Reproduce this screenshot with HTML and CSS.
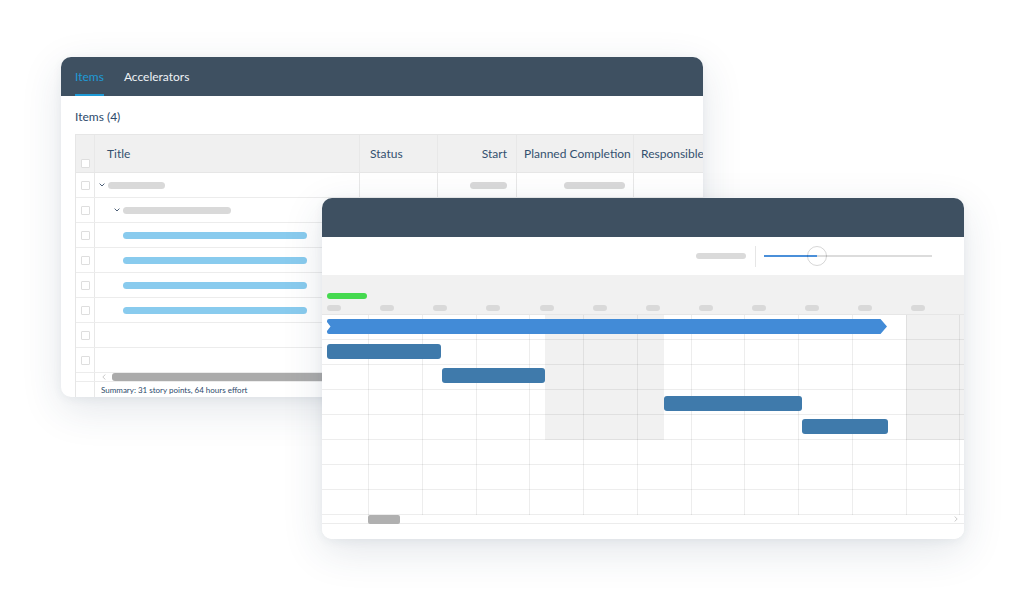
FILE: index.html
```html
<!DOCTYPE html>
<html lang="en">
<head>
<meta charset="utf-8">
<title>Items and Gantt</title>
<link rel="stylesheet" href="styles.css">
</head>
<body>
<div class="desk">

  <section class="win win-items">
    <header class="win-head">
      <nav class="tabs">
        <span class="tab active">Items</span>
        <span class="tab">Accelerators</span>
      </nav>
    </header>
    <div class="items-body">
      <h2 class="items-title">Items (4)</h2>
      <div class="table">
        <div class="tr th">
          <div class="td cb cb-head"><span class="box"></span></div>
          <div class="td c-title">Title</div>
          <div class="td c-status">Status</div>
          <div class="td c-start">Start</div>
          <div class="td c-plan">Planned Completion</div>
          <div class="td c-resp">Responsible</div>
        </div>
        <div class="tr">
          <div class="td cb"><span class="box"></span></div>
          <div class="td c-title lvl1"><svg class="chev" viewBox="0 0 6 4" width="6" height="4"><polyline points="0.6,0.6 3,3 5.4,0.6"/></svg><span class="ph ph-a"></span></div>
          <div class="td c-status"></div>
          <div class="td c-start"><span class="ph ph-start"></span></div>
          <div class="td c-plan"><span class="ph ph-plan"></span></div>
          <div class="td c-resp"></div>
        </div>
        <div class="tr">
          <div class="td cb"><span class="box"></span></div>
          <div class="td c-title lvl2"><svg class="chev" viewBox="0 0 6 4" width="6" height="4"><polyline points="0.6,0.6 3,3 5.4,0.6"/></svg><span class="ph ph-b"></span></div>
          <div class="td c-status"></div>
          <div class="td c-start"></div>
          <div class="td c-plan"></div>
          <div class="td c-resp"></div>
        </div>
        <div class="tr">
          <div class="td cb"><span class="box"></span></div>
          <div class="td c-title lvl3"><span class="ph ph-item"></span></div>
          <div class="td c-status"></div>
          <div class="td c-start"></div>
          <div class="td c-plan"></div>
          <div class="td c-resp"></div>
        </div>
        <div class="tr">
          <div class="td cb"><span class="box"></span></div>
          <div class="td c-title lvl3"><span class="ph ph-item"></span></div>
          <div class="td c-status"></div>
          <div class="td c-start"></div>
          <div class="td c-plan"></div>
          <div class="td c-resp"></div>
        </div>
        <div class="tr">
          <div class="td cb"><span class="box"></span></div>
          <div class="td c-title lvl3"><span class="ph ph-item"></span></div>
          <div class="td c-status"></div>
          <div class="td c-start"></div>
          <div class="td c-plan"></div>
          <div class="td c-resp"></div>
        </div>
        <div class="tr">
          <div class="td cb"><span class="box"></span></div>
          <div class="td c-title lvl3"><span class="ph ph-item"></span></div>
          <div class="td c-status"></div>
          <div class="td c-start"></div>
          <div class="td c-plan"></div>
          <div class="td c-resp"></div>
        </div>
        <div class="tr">
          <div class="td cb"><span class="box"></span></div>
          <div class="td c-title"></div>
          <div class="td c-status"></div>
          <div class="td c-start"></div>
          <div class="td c-plan"></div>
          <div class="td c-resp"></div>
        </div>
        <div class="tr">
          <div class="td cb"><span class="box"></span></div>
          <div class="td c-title"></div>
          <div class="td c-status"></div>
          <div class="td c-start"></div>
          <div class="td c-plan"></div>
          <div class="td c-resp"></div>
        </div>
        <div class="tr tr-scroll">
          <div class="td cb"></div>
          <div class="track">
            <svg class="arr-left" viewBox="0 0 4 6" width="4" height="6"><polyline points="3.4,0.5 0.8,3 3.4,5.5"/></svg>
            <span class="thumb"></span>
          </div>
        </div>
        <div class="tr tr-summary">
          <div class="td cb"></div>
          <div class="summary">Summary: 31 story points, 64 hours effort</div>
        </div>
      </div>
    </div>
  </section>

  <section class="win win-gantt">
    <header class="win-head"></header>
    <div class="toolbar">
      <span class="ph ph-tool"></span>
      <span class="vdiv"></span>
      <div class="slider">
        <span class="slider-fill"></span>
        <span class="knob"></span>
      </div>
    </div>
    <div class="timehead">
      <span class="ph ph-green"></span>
      <div class="ticks">
        <span class="ph tick"></span><span class="ph tick"></span><span class="ph tick"></span>
        <span class="ph tick"></span><span class="ph tick"></span><span class="ph tick"></span>
        <span class="ph tick"></span><span class="ph tick"></span><span class="ph tick"></span>
        <span class="ph tick"></span><span class="ph tick"></span><span class="ph tick"></span>
      </div>
    </div>
    <div class="chart">
      <div class="shade shade-a"></div>
      <div class="shade shade-b"></div>
      <div class="grow"></div>
      <div class="grow"></div>
      <div class="grow"></div>
      <div class="grow"></div>
      <div class="grow"></div>
      <div class="grow"></div>
      <div class="grow"></div>
      <div class="grow"></div>
      <div class="cols">
        <span class="col col-first"></span>
        <span class="col"></span><span class="col"></span><span class="col"></span>
        <span class="col"></span><span class="col"></span><span class="col"></span>
        <span class="col"></span><span class="col"></span><span class="col"></span>
        <span class="col"></span><span class="col"></span><span class="col"></span>
      </div>
      <svg class="bar-summary" viewBox="0 0 560 15" width="560" height="15"><path d="M2 0 H553.5 L560 7.5 L553.5 15 H2 Q0 15 0 13 V12 L3.5 7.5 L0 3 V2 Q0 0 2 0 Z"/></svg>
      <span class="bar bar-1"></span>
      <span class="bar bar-2"></span>
      <span class="bar bar-3"></span>
      <span class="bar bar-4"></span>
    </div>
    <div class="hscroll">
      <span class="thumb thumb-g"></span>
      <svg class="arr-right" viewBox="0 0 4 6" width="4" height="6"><polyline points="0.6,0.5 3.2,3 0.6,5.5"/></svg>
    </div>
    <div class="gfoot"></div>
  </section>

</div>
</body>
</html>
```

FILE: styles.css
```css
* {
  box-sizing: border-box;
  margin: 0;
  padding: 0;
}

body {
  margin: 0;
  background: #ffffff;
  font-family: Lato, "Open Sans", sans-serif;
  color: #2d4a6b;
}

.desk {
  position: relative;
  width: 1024px;
  height: 604px;
  overflow: hidden;
  background: #ffffff;
}

/* ---------- windows ---------- */
.win {
  position: absolute;
  width: 642px;
  background: #ffffff;
  border-radius: 10px;
  overflow: hidden;
  display: flex;
  flex-direction: column;
  box-shadow: 0 12px 40px rgba(40, 60, 90, 0.13), 0 2px 10px rgba(40, 60, 90, 0.06);
}

.win-items {
  left: 61px;
  top: 57px;
  height: 340px;
}

.win-gantt {
  left: 322px;
  top: 198px;
  height: 341px;
}

.win-head {
  flex: none;
  height: 39px;
  background: #3e5061;
}

/* ---------- tabs ---------- */
.tabs {
  display: flex;
  height: 100%;
  padding-left: 14px;
  gap: 20px;
}

.tab {
  display: flex;
  align-items: center;
  height: 100%;
  padding-top: 2px;
  font-size: 12px;
  color: #eef2f6;
  border-bottom: 2px solid transparent;
}

.tab.active {
  color: #1e9ad6;
  border-bottom-color: #1e9ad6;
}

/* ---------- items table ---------- */
.items-body {
  flex: 1;
  padding-left: 14px;
  padding-top: 14px;
  overflow: hidden;
}

.items-title {
  font-size: 12px;
  font-weight: 400;
  line-height: 14px;
  height: 14px;
  margin-bottom: 10px;
  color: #2d4a6b;
}

.table {
  border-left: 1px solid #e6e6e6;
  width: 720px;
}

.tr {
  display: grid;
  grid-template-columns: 19px 265px 78px 79px 117px 160px;
  height: 25px;
  border-bottom: 1px solid #ececec;
}

.td {
  display: flex;
  align-items: center;
  border-right: 1px solid #e8e8e8;
  min-width: 0;
}

.th {
  height: 39px;
  background: #f0f0f0;
  border-top: 1px solid #e6e6e6;
  border-bottom-color: #e6e6e6;
  font-size: 12px;
  color: #34506f;
}

.cb {
  justify-content: center;
}

.cb-head {
  align-items: flex-end;
  padding-bottom: 4px;
}

.box {
  width: 9px;
  height: 9px;
  background: #ffffff;
  border: 1px solid #dedede;
  border-radius: 1px;
}

.c-title { padding-left: 12px; }
.c-status { padding-left: 10px; }
.c-start { justify-content: flex-end; padding-right: 9px; }
.c-plan { padding-left: 7px; }
.tr:not(.th) .c-plan { justify-content: flex-end; padding-right: 8px; padding-left: 0; }
.c-resp { padding-left: 7px; border-right: none; white-space: nowrap; }

.c-title.lvl1 { padding-left: 4px; }
.c-title.lvl2 { padding-left: 19px; }
.c-title.lvl3 { padding-left: 28px; }

.chev {
  flex: none;
  margin-right: 3px;
  fill: none;
  stroke: #4d6078;
  stroke-width: 1;
}

.ph {
  display: block;
  height: 7px;
  border-radius: 4px;
  background: #d9d9d9;
}

.ph-a { width: 57px; }
.ph-b { width: 108px; }
.ph-item { width: 184px; background: #89cbee; }
.ph-start { width: 37px; }
.ph-plan { width: 61px; }

.tr-scroll {
  height: 9px;
}

.track {
  grid-column: 2 / -1;
  display: flex;
  align-items: center;
  padding-left: 7px;
}

.arr-left,
.arr-right {
  flex: none;
  fill: none;
  stroke: #c4c4c4;
  stroke-width: 0.9;
}

.thumb {
  display: block;
  height: 8px;
  width: 320px;
  margin-left: 6px;
  border-radius: 3px;
  background: #ababab;
}

.tr-summary {
  height: 15px;
  border-bottom: none;
}

.summary {
  grid-column: 2 / -1;
  display: flex;
  align-items: center;
  padding-left: 6px;
  font-size: 8px;
  color: #2d4a6b;
  white-space: nowrap;
}

/* ---------- gantt ---------- */
.toolbar {
  flex: none;
  height: 38px;
  display: flex;
  align-items: center;
  justify-content: flex-end;
  padding-right: 32px;
  background: #ffffff;
}

.ph-tool {
  width: 50px;
  height: 6px;
  background: #dadada;
}

.vdiv {
  width: 1px;
  height: 21px;
  margin: 0 8px 0 9px;
  background: #e6e6e6;
}

.slider {
  position: relative;
  width: 168px;
  height: 2px;
  background: #dcdcdc;
}

.slider-fill {
  display: block;
  width: 53px;
  height: 2px;
  background: #4a8fd9;
}

.knob {
  position: absolute;
  left: 43px;
  top: -9px;
  width: 20px;
  height: 20px;
  border-radius: 50%;
  border: 1px solid rgba(0, 0, 0, 0.16);
}

.timehead {
  flex: none;
  height: 40px;
  background: #f1f1f1;
  border-bottom: 1px solid #e6e6e6;
  padding: 18px 0 0 5px;
  display: flex;
  flex-direction: column;
  gap: 6px;
}

.ph-green {
  width: 40px;
  height: 6px;
  background: #45d94f;
}

.ticks {
  display: flex;
  gap: 39.13px;
}

.tick {
  flex: none;
  width: 14px;
  height: 6px;
  background: #d9d9d9;
}

.chart {
  flex: none;
  position: relative;
  height: 200px;
}

.shade {
  position: absolute;
  top: 0;
  height: 125px;
  background: #f1f1f1;
}

.shade-a { left: 223px; width: 119px; }
.shade-b { left: 584px; width: 60px; }

.grow {
  position: relative;
  height: 25px;
  border-bottom: 1px solid rgba(0, 0, 0, 0.07);
}

.cols {
  position: absolute;
  inset: 0;
  display: flex;
  pointer-events: none;
}

.col {
  flex: none;
  width: 53.75px;
  height: 100%;
  border-right: 1px solid rgba(0, 0, 0, 0.07);
}

.col-first {
  width: 47px;
}

.bar-summary {
  position: absolute;
  left: 5px;
  top: 4px;
  fill: #428bd7;
}

.bar {
  position: absolute;
  height: 15px;
  border-radius: 3px;
  background: #3f7aab;
}

.bar-1 { left: 5px; top: 29px; width: 114px; }
.bar-2 { left: 120px; top: 53px; width: 103px; }
.bar-3 { left: 342px; top: 81px; width: 138px; }
.bar-4 { left: 480px; top: 104px; width: 86px; }

.hscroll {
  flex: none;
  height: 9px;
  display: flex;
  align-items: center;
  padding-left: 46px;
  padding-right: 6px;
  border-bottom: 1px solid #ececec;
}

.thumb-g {
  width: 32px;
  height: 9px;
  margin-left: 0;
  margin-right: auto;
  border-radius: 2px;
  background: #b0b0b0;
}

.gfoot {
  flex: 1;
  background: #ffffff;
}
```
